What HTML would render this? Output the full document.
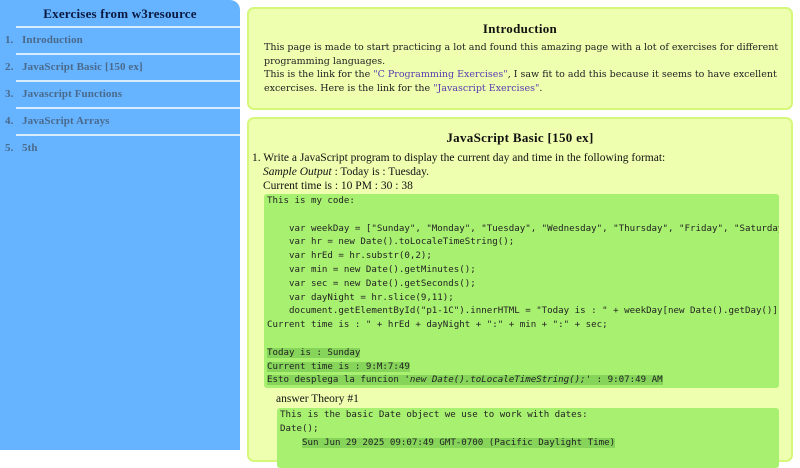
<!DOCTYPE html>
<html><head><style>
*{margin:0;padding:0;box-sizing:border-box}
body{width:800px;height:450px;overflow:hidden;background:#fff;position:relative;font-family:"Liberation Serif",serif}
#side{position:absolute;left:0;top:0;width:240px;height:450px;background:#66b3ff;border-top-right-radius:10px}
#side h3{font-size:13px;text-align:center;color:#0a1a40;margin-top:6px;height:20px;line-height:15px;letter-spacing:.2px}
.it{position:absolute;left:0;width:240px;height:27px;font-size:11px;font-weight:bold;color:#4a6a8c;letter-spacing:.1px}
.it span.n{position:absolute;left:5px;top:6px}
.it span.t{position:absolute;left:22px;top:6px}
.ln{position:absolute;left:16px;width:224px;height:1.5px;background:#d8ecff}
.pan{position:absolute;left:247px;width:546px;background:#eeffb0;border:2px solid #d5f77a;border-radius:7px}
h4{font-size:13px;text-align:center;color:#111;letter-spacing:.3px}
.intro p{font-family:"DejaVu Serif",serif;font-size:9.5px;line-height:13.7px;color:#222;margin-left:15px}
a{color:#5a3ab0;text-decoration:none}
.q{font-size:11.5px;line-height:14px;color:#111}
pre{font-family:"DejaVu Sans Mono",monospace;font-size:9.15px;line-height:13.8px;color:#222;background:#a8f070;border-radius:3px;overflow:hidden;white-space:pre}
.hl{background:#86d45a}
</style></head><body>
<div id="side">
<h3>Exercises from w3resource</h3>
<div class="ln" style="top:26px"></div>
<div class="it" style="top:28px"><span class="n">1.</span><span class="t">Introduction</span></div>
<div class="ln" style="top:53px"></div>
<div class="it" style="top:55px"><span class="n">2.</span><span class="t">JavaScript Basic [150 ex]</span></div>
<div class="ln" style="top:80px"></div>
<div class="it" style="top:82px"><span class="n">3.</span><span class="t">Javascript Functions</span></div>
<div class="ln" style="top:107px"></div>
<div class="it" style="top:109px"><span class="n">4.</span><span class="t">JavaScript Arrays</span></div>
<div class="ln" style="top:134px"></div>
<div class="it" style="top:136px"><span class="n">5.</span><span class="t">5th</span></div>
</div>

<div class="pan intro" style="top:7px;height:103px">
<h4 style="margin-top:12px;height:20px">Introduction</h4>
<p>This page is made to start practicing a lot and found this amazing page with a lot of exercises for different programming languages.<br>This is the link for the <a>"C Programming Exercises"</a>, I saw fit to add this because it seems to have excellent excercises. Here is the link for the <a>"Javascript Exercises"</a>.</p>
</div>

<div class="pan" style="top:117px;height:345px">
<h4 style="margin-top:11px;height:21px">JavaScript Basic [150 ex]</h4>
<div class="q" style="margin-left:3px">1. Write a JavaScript program to display the current day and time in the following format:</div>
<div class="q" style="margin-left:14px"><i>Sample Output</i> : Today is : Tuesday.<br>Current time is : 10 PM : 30 : 38</div>
<pre style="margin:1px 12px 0 15px;height:194px;padding:1px 0 0 3px">This is my code:

    var weekDay = ["Sunday", "Monday", "Tuesday", "Wednesday", "Thursday", "Friday", "Saturday"];
    var hr = new Date().toLocaleTimeString();
    var hrEd = hr.substr(0,2);
    var min = new Date().getMinutes();
    var sec = new Date().getSeconds();
    var dayNight = hr.slice(9,11);
    document.getElementById("p1-1C").innerHTML = "Today is : " + weekDay[new Date().getDay()] + "&lt;br&gt;
Current time is : " + hrEd + dayNight + ":" + min + ":" + sec;

<span class="hl">Today is : Sunday</span>
<span class="hl">Current time is : 9:M:7:49</span>
<span class="hl">Esto desplega la funcion '<i>new Date().toLocaleTimeString();</i>' : 9:07:49 AM</span></pre>
<div class="q" style="margin:4px 0 0 27px;font-size:11.5px">answer Theory #1</div>
<pre style="margin:2px 12px 0 28px;height:60px;padding:1px 0 0 3px">This is the basic Date object we use to work with dates:
Date();
    <span class="hl">Sun Jun 29 2025 09:07:49 GMT-0700 (Pacific Daylight Time)</span></pre>
</div>
</body></html>
